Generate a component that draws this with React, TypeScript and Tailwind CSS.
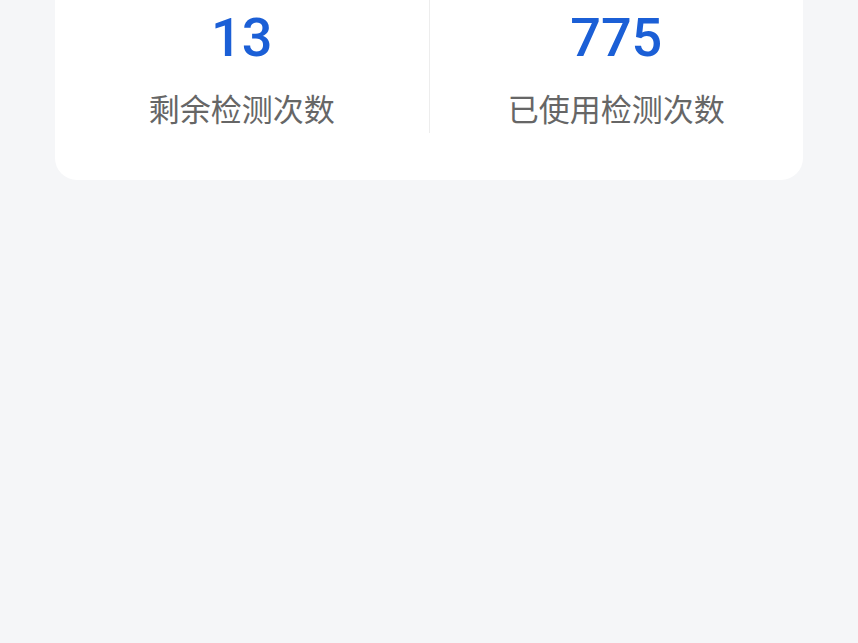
export default function App() {
  return (
    <div className="min-h-[643px] w-full bg-[#f5f6f8] overflow-hidden font-['Noto_Sans','Noto_Sans_CJK_SC',sans-serif]">
      <div className="px-[55px]">
        <div className="-mt-[40px] rounded-[22px] bg-white pb-[47px] flex">
          <div className="flex-1 flex flex-col items-center pt-[48px] pb-[10px] border-r border-[#ededed]">
            <div className="text-[54px] leading-[60px] font-medium text-[#1b5fd6] font-['Roboto','Noto_Sans',sans-serif]">13</div>
            <div className="mt-[24px] text-[31px] leading-[31px] text-[#666666] font-['Noto_Sans_CJK_SC',sans-serif]">剩余检测次数</div>
          </div>
          <div className="flex-1 flex flex-col items-center pt-[48px] pb-[10px]">
            <div className="text-[54px] leading-[60px] font-medium text-[#1b5fd6] font-['Roboto','Noto_Sans',sans-serif]">775</div>
            <div className="mt-[24px] text-[31px] leading-[31px] text-[#666666] font-['Noto_Sans_CJK_SC',sans-serif]">已使用检测次数</div>
          </div>
        </div>
      </div>
    </div>
  );
}
